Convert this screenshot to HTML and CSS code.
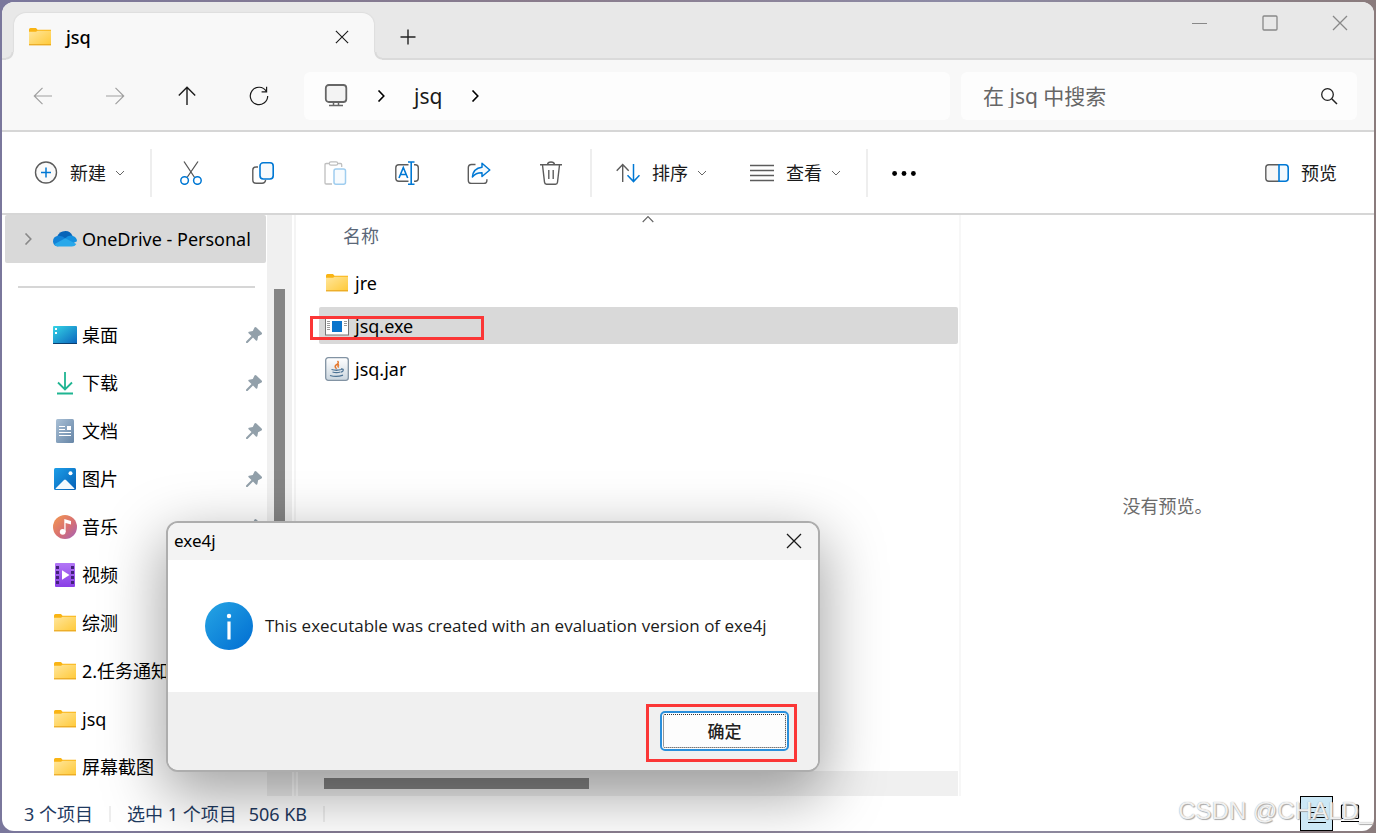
FILE: index.html
```html
<!DOCTYPE html>
<html lang="zh-CN">
<head>
<meta charset="utf-8">
<meta name="viewport" content="width=device-width, initial-scale=1">
<title>jsq</title>
<link rel="stylesheet" href="styles.css">
</head>
<body>
<svg class="defs" aria-hidden="true">
  <defs>
    <linearGradient id="g-folder" x1="0" y1="0" x2="1" y2="1"><stop offset="0" stop-color="#ffe69c"/><stop offset="1" stop-color="#ffc937"/></linearGradient>
    <linearGradient id="g-desk" x1="0" y1="0" x2="1" y2="1"><stop offset="0" stop-color="#35d5e6"/><stop offset="1" stop-color="#0a63bd"/></linearGradient>
    <linearGradient id="g-doc" x1="0" y1="0" x2="1" y2="1"><stop offset="0" stop-color="#a9c0d6"/><stop offset="1" stop-color="#6685a6"/></linearGradient>
    <linearGradient id="g-pic" x1="0" y1="0" x2="1" y2="1"><stop offset="0" stop-color="#1d9ee8"/><stop offset="1" stop-color="#0560b6"/></linearGradient>
    <linearGradient id="g-music" x1="0" y1="0" x2="1" y2="1"><stop offset="0" stop-color="#f59a4e"/><stop offset=".55" stop-color="#d76f72"/><stop offset="1" stop-color="#a362bb"/></linearGradient>
    <linearGradient id="g-video" x1="0" y1="0" x2="0" y2="1"><stop offset="0" stop-color="#b276f6"/><stop offset="1" stop-color="#8a3fe6"/></linearGradient>
    <linearGradient id="g-info" x1="0" y1="0" x2="1" y2="1"><stop offset="0" stop-color="#26a5e4"/><stop offset="1" stop-color="#006dd2"/></linearGradient>
    <linearGradient id="g-jar" x1="0" y1="0" x2="0" y2="1"><stop offset="0" stop-color="#fff"/><stop offset="1" stop-color="#cbd6df"/></linearGradient>
    <symbol id="folder" viewBox="0 0 24 24"><path d="M1 4.500q0-1.500 1.500-1.500h5.500l1.500 1.700h13.500v5H1z" fill="#f9b414"/><path d="M1 6.700h7l1.600-1H23v14.600H1z" fill="url(#g-folder)"/><path d="M1 19.300h22v1H1z" fill="#e5a019"/></symbol>
    <symbol id="pin" viewBox="0 0 18 18"><path d="M9.500 1.400q.9-.9 1.900 0l5.200 5.200q.9 1-.1 1.900l-3.400 1.800-.7 3.700q-.5 1.300-1.500.5L8 11.600 2.500 17H1.100v-1.400L6.500 10 3.600 7.200q-.8-1 .4-1.500l3.800-.8z" fill="#92a0aa"/></symbol>
    <symbol id="down" viewBox="0 0 12 12"><path d="M2 4l4 4 4-4" fill="none" stroke="#666" stroke-width="1"/></symbol>
    <symbol id="right" viewBox="0 0 12 12"><path d="M3.500 0.500L8.800 6 3.500 11.500" fill="none" stroke="currentColor" stroke-width="1.600"/></symbol>
    <symbol id="close" viewBox="0 0 16 16"><path d="M1 1l14 14M15 1L1 15" fill="none" stroke="currentColor" stroke-width="1.300"/></symbol>
  </defs>
</svg>

<div class="window">
  <header class="titlebar">
    <div class="tab">
      <svg class="i24"><use href="#folder"/></svg>
      <span class="tab-name">jsq</span>
      <button class="plain" aria-label="关闭标签页"><svg class="i14"><use href="#close"/></svg></button>
    </div>
    <button class="plain add" aria-label="新标签页"><svg class="i16" viewBox="0 0 16 16"><path d="M8 .5v15M.5 8h15" stroke="#222" stroke-width="1.400"/></svg></button>
    <div class="winctl">
      <button class="plain" aria-label="最小化"><svg class="i16" viewBox="0 0 16 16"><path d="M0 8.500h15" stroke="#888" stroke-width="1"/></svg></button>
      <button class="plain" aria-label="最大化"><svg class="i16" viewBox="0 0 16 16"><rect x="1" y="1" width="14" height="14" rx="1" fill="none" stroke="#888" stroke-width="1.300"/></svg></button>
      <button class="plain" aria-label="关闭"><svg class="i16"><use href="#close"/></svg></button>
    </div>
  </header>

  <nav class="navbar">
    <button class="plain nav-btn off" aria-label="后退"><svg class="i20" viewBox="0 0 20 20"><path d="M19 10H1.500M9.500 1.800L1.300 10l8.200 8.200" fill="none" stroke="currentColor" stroke-width="1.200"/></svg></button>
    <button class="plain nav-btn off" aria-label="前进"><svg class="i20" viewBox="0 0 20 20"><path d="M1 10h17.500M10.500 1.800l8.200 8.200-8.200 8.200" fill="none" stroke="currentColor" stroke-width="1.200"/></svg></button>
    <button class="plain nav-btn" aria-label="向上"><svg class="i20" viewBox="0 0 20 20"><path d="M10 19V1.500M1.800 9.500L10 1.300l8.200 8.200" fill="none" stroke="currentColor" stroke-width="1.400"/></svg></button>
    <button class="plain nav-btn" aria-label="刷新"><svg class="i20" viewBox="0 0 20 20"><path d="M17.300 5.200A8.700 8.700 0 1 0 18.700 10M17.600.8v5h-5" fill="none" stroke="currentColor" stroke-width="1.200"/></svg></button>
    <div class="address">
      <svg class="i24" viewBox="0 0 24 24"><rect x="1.800" y="1" width="20.500" height="17" rx="3" fill="#f3f3f3" stroke="#666" stroke-width="1.800"/><path d="M9.500 18.500v3M14.500 18.500v3M5 21.600h14" stroke="#666" stroke-width="1.500"/></svg>
      <svg class="i12"><use href="#right"/></svg>
      <a class="crumb" href="#">jsq</a>
      <svg class="i12"><use href="#right"/></svg>
    </div>
    <div class="search">
      <input type="search" aria-label="搜索" placeholder="在 jsq 中搜索">
      <svg class="i18" viewBox="0 0 18 18"><circle cx="7.500" cy="7.500" r="5.800" fill="none" stroke="#222" stroke-width="1.300"/><path d="M11.700 11.700l5.300 5.300" stroke="#222" stroke-width="1.500"/></svg>
    </div>
  </nav>

  <div class="toolbar">
    <button class="plain cmd">
      <svg class="i24" viewBox="0 0 24 24"><circle cx="12" cy="11.500" r="10.500" fill="#fafafa" stroke="#5c5c5c" stroke-width="1.400"/><path d="M12 6.500v10M7 11.500h10" stroke="#0078d4" stroke-width="1.500"/></svg>
      <span>新建</span><svg class="i12"><use href="#down"/></svg>
    </button>
    <i class="sep"></i>
    <button class="plain tool" aria-label="剪切"><svg class="i24" viewBox="0 0 24 24"><path d="M5 .5l10.600 16M19 .5L8.400 16" fill="none" stroke="#555" stroke-width="1.300"/><circle cx="5.600" cy="19.500" r="3.800" fill="#fff" stroke="#0078d4" stroke-width="1.500"/><circle cx="18.400" cy="19.500" r="3.800" fill="#fff" stroke="#0078d4" stroke-width="1.500"/></svg></button>
    <button class="plain tool" aria-label="复制"><svg class="i24" viewBox="0 0 24 24"><path d="M7 6H5Q1.800 6 1.800 9v10q0 3.200 3.200 3.200h6q3.200 0 3.600-3.400" fill="none" stroke="#5c5c5c" stroke-width="1.400"/><rect x="9" y="1.800" width="13.200" height="16.200" rx="3.200" fill="#f7fafc" stroke="#0078d4" stroke-width="1.600"/></svg></button>
    <button class="plain tool" aria-label="粘贴"><svg class="i24" viewBox="0 0 24 24"><path d="M6.500 2.500H3.200Q2 2.500 2 3.700v18.200Q2 23 3.200 23H9M14.500 2.500h3q1.200 0 1.200 1.300V6" fill="none" stroke="#bfbfbf" stroke-width="1.300"/><rect x="6.300" y=".8" width="8.400" height="3.400" rx="1.600" fill="#fff" stroke="#bfbfbf" stroke-width="1.200"/><rect x="11" y="8" width="11.500" height="15.200" rx="2" fill="#f7fbfe" stroke="#9fcdef" stroke-width="1.500"/></svg></button>
    <button class="plain tool" aria-label="重命名"><svg class="i24" viewBox="0 0 24 24"><path d="M13.500 3.700H3.800Q.8 3.700.8 6.700v10.600q0 3 3 3h9.700M19 3.700h1.300q3 0 3 3v10.600q0 3-3 3H19" fill="none" stroke="#5c5c5c" stroke-width="1.400"/><path d="M4 17L8.300 6.500 12.700 17M5.500 13.500h5.700M13 1h6.500M13 23.200h6.500M16.200 1v22" fill="none" stroke="#0078d4" stroke-width="1.600"/></svg></button>
    <button class="plain tool" aria-label="共享"><svg class="i24" viewBox="0 0 24 24"><path d="M8.500 3.500H4.500Q1.300 3.500 1.300 6.700v12.500q0 3.200 3.200 3.200h12.200q3.200 0 3.200-3.200v-1" fill="none" stroke="#5c5c5c" stroke-width="1.400"/><path d="M15 2.300l7.800 6.700-7.800 6.500v-3.700q-6-.2-9.600 4.200Q6 7.300 15 6.200z" fill="#f5fafd" stroke="#0078d4" stroke-width="1.500" stroke-linejoin="round"/></svg></button>
    <button class="plain tool" aria-label="删除"><svg class="i24" viewBox="0 0 24 24"><path d="M1 3.700h22M8.500 3.500q.3-2.500 3.500-2.500t3.500 2.500M3.500 4l2 17.200q.2 2 2 2h9q1.800 0 2-2L20.500 4M9.800 9v9M14.200 9v9" fill="none" stroke="#5c5c5c" stroke-width="1.400"/></svg></button>
    <i class="sep"></i>
    <button class="plain cmd">
      <svg class="i24" viewBox="0 0 24 24"><path d="M6.700 21V3.500M.7 9.700l6-6.300 6 6.300" fill="none" stroke="#5c5c5c" stroke-width="1.400"/><path d="M17.500 3v17.500M11.500 14.300l6 6.300 6-6.300" fill="none" stroke="#0078d4" stroke-width="1.500"/></svg>
      <span>排序</span><svg class="i12"><use href="#down"/></svg>
    </button>
    <button class="plain cmd">
      <svg class="i24" viewBox="0 0 24 24"><path d="M0 4.500h24M0 9.500h24M0 14.500h24M0 19.500h24" stroke="#5c5c5c" stroke-width="1.300"/></svg>
      <span>查看</span><svg class="i12"><use href="#down"/></svg>
    </button>
    <i class="sep"></i>
    <button class="plain tool" aria-label="更多"><svg class="i24" viewBox="0 0 24 24"><circle cx="2.600" cy="12.500" r="2.400"/><circle cx="12" cy="12.500" r="2.400"/><circle cx="21.400" cy="12.500" r="2.400"/></svg></button>
    <button class="plain cmd preview-btn">
      <svg class="i24" viewBox="0 0 24 24"><path d="M14 3.700H3.800Q.8 3.700.8 6.700v10.600q0 3 3 3H14" fill="#f7f7f7" stroke="#5c5c5c" stroke-width="1.400"/><path d="M14 3.700h6.200q3 0 3 3v10.600q0 3-3 3H14z" fill="#f2f9fe" stroke="#0078d4" stroke-width="1.600"/></svg>
      <span>预览</span>
    </button>
  </div>

  <main class="main">
    <aside class="side">
      <ul class="tree">
        <li class="node current"><svg class="i12 twist"><use href="#right"/></svg><svg class="i24" viewBox="0 0 24 24"><path d="M4 10q2-6 8.500-6 5 0 7 5l-9 7z" fill="#0864b8"/><path d="M5 8.800q4-.5 7.500 2.700L5 19.500Q0 19 0 14.200 0 9.700 5 8.800z" fill="#1382d6"/><path d="M12 11.500q3-3.400 7-2.800 5 1 5 5.500l-6 3z" fill="#1490df"/><path d="M12.300 11.300l11 5.800q-1.300 2.500-4.500 2.500H5.500q-2.800-.2-4.300-2.300z" fill="#28a8ea"/></svg><span>OneDrive - Personal</span></li>
        <li class="rule"></li>
        <li class="node"><svg class="i24" viewBox="0 0 24 24"><rect y="3" width="24" height="18" rx="1" fill="url(#g-desk)"/><path d="M0 20h24v.5q0 .5-1 .5H1q-1 0-1-.5z" fill="#0b3f6f"/><path d="M2 5h2v2H2zM2 9h2v2H2z" fill="#fff"/></svg><span>桌面</span><svg class="i18 pin"><use href="#pin"/></svg></li>
        <li class="node"><svg class="i24" viewBox="0 0 24 24"><path d="M12 1v18M5 11.500l7 7 7-7M4 22.500h16" fill="none" stroke="#1fb592" stroke-width="1.800"/></svg><span>下载</span><svg class="i18 pin"><use href="#pin"/></svg></li>
        <li class="node"><svg class="i24" viewBox="0 0 24 24"><rect x="3" width="18" height="24" rx="1.500" fill="url(#g-doc)"/><path d="M6 7.500h6M6 10.500h6M6 13.500h12M6 16.500h12" stroke="#fff" stroke-width="1"/><rect x="14" y="7" width="4" height="4" fill="#fff"/></svg><span>文档</span><svg class="i18 pin"><use href="#pin"/></svg></li>
        <li class="node"><svg class="i24" viewBox="0 0 24 24"><rect x="1" y="1" width="22" height="22" rx="1.500" fill="url(#g-pic)"/><path d="M2.500 21.500L11 13q1-.9 2 0l8.500 8.500q-.5.500-1 .500h-17q-.5 0-1-.5z" fill="#f4f9fd"/><circle cx="17.500" cy="6.300" r="2" fill="#fff"/></svg><span>图片</span><svg class="i18 pin"><use href="#pin"/></svg></li>
        <li class="node"><svg class="i24" viewBox="0 0 24 24"><circle cx="12" cy="12" r="12" fill="url(#g-music)"/><circle cx="9.700" cy="16.800" r="2.900" fill="#fff"/><path d="M11.300 4l6.700 2v3.500L12.600 8v9h-1.300z" fill="#fff"/></svg><span>音乐</span><svg class="i18 pin"><use href="#pin"/></svg></li>
        <li class="node"><svg class="i24" viewBox="0 0 24 24"><rect x="2" width="20" height="24" rx="1" fill="url(#g-video)"/><path d="M4.500 3v20M19.500 3v20" stroke="#43227a" stroke-width="3" stroke-dasharray="3 2"/><path d="M9 7.300l7.500 4.700L9 16.700z" fill="#fff"/></svg><span>视频</span></li>
        <li class="node"><svg class="i24"><use href="#folder"/></svg><span>综测</span></li>
        <li class="node"><svg class="i24"><use href="#folder"/></svg><span>2.任务通知</span></li>
        <li class="node"><svg class="i24"><use href="#folder"/></svg><span>jsq</span></li>
        <li class="node"><svg class="i24"><use href="#folder"/></svg><span>屏幕截图</span></li>
      </ul>
      <div class="vbar"><div class="vthumb"></div></div>
    </aside>

    <section class="files">
      <div class="colhead">
        <svg class="i12 caret" viewBox="0 0 12 12"><path d="M.7 7L6 1.700 11.300 7" fill="none" stroke="#666" stroke-width="1.200"/></svg>
        <span>名称</span>
      </div>
      <ul class="list">
        <li class="file"><svg class="i24"><use href="#folder"/></svg><span>jre</span></li>
        <li class="file selected"><svg class="i24" viewBox="0 0 24 24"><rect x=".5" y="2.500" width="23" height="18.500" fill="#fff" stroke="#777"/><rect x="7" y="7" width="10" height="11" fill="#0a74cc"/><path d="M2 7.500h3M2 9.500h3M2 11.500h3M2 13.500h3M2 15.500h3M19 7.500h3M19 9.500h3M19 11.500h3" stroke="#999"/></svg><span>jsq.exe</span><i class="mark"></i></li>
        <li class="file"><svg class="i24" viewBox="0 0 24 24"><rect x=".7" y=".7" width="22.600" height="22.600" rx="2.500" fill="url(#g-jar)" stroke="#8293a3" stroke-width="1.300"/><path d="M12.500 4q2 1.800-1 3.700-2.800 2 .2 4M14 7.500q-2 1.200-.3 3" fill="none" stroke="#e5762a" stroke-width="1.500"/><path d="M6.500 12.500q5 1.500 9.800 0M7.500 15q4 1.300 8 0M5 18.500q6.500 2 13-.3M16 12q3-.2 2 1.800-.8 1-2 1.200" fill="none" stroke="#4d7394" stroke-width="1.300"/></svg><span>jsq.jar</span></li>
      </ul>
      <div class="hbar"><div class="hthumb"></div></div>
    </section>

    <section class="preview"><p>没有预览。</p></section>
  </main>

  <footer class="status">
    <span>3 个项目</span><i></i><span>选中 1 个项目</span><span class="size">506 KB</span><i></i>
    <div class="views">
      <button class="plain view on" aria-label="详细信息"><svg class="i20" viewBox="0 0 20 20"><path d="M1 3.500h18M1 8.500h18M1 13.500h18M1 18.500h18" stroke="#000" stroke-width="1"/></svg></button>
      <button class="plain view" aria-label="大图标"><svg class="i20" viewBox="0 0 20 20"><rect x="1.500" y="1" width="17" height="13.500" rx="1" fill="none" stroke="#000" stroke-width="1.200"/><path d="M1 17.500h18" stroke="#000"/></svg></button>
    </div>
  </footer>
</div>

<div class="dialog" role="dialog" aria-labelledby="dlg-title">
  <div class="dlg-head"><span id="dlg-title">exe4j</span><button class="plain" aria-label="关闭"><svg class="i16"><use href="#close"/></svg></button></div>
  <div class="dlg-body">
    <svg class="i48" viewBox="0 0 48 48"><circle cx="24" cy="24" r="24" fill="url(#g-info)"/><circle cx="24" cy="14" r="2.200" fill="#fff"/><path d="M24 19.500v18" stroke="#fff" stroke-width="3.200"/></svg>
    <p>This executable was created with an evaluation version of exe4j</p>
  </div>
  <div class="dlg-foot"><div class="ok-mark"><button class="ok">确定</button></div></div>
</div>
<div class="watermark">CSDN @CHALD_</div>
</body>
</html>
```
FILE: styles.css
```css
* { box-sizing: border-box; }
body {
  margin: 0;
  height: 100vh;
  padding: 2px;
  overflow: hidden;
  position: relative;
  background: linear-gradient(90deg, #7a779c, #8a7c8c 40%, #8d8ba6 70%, #8a7b7c);
  font: 18px/24px "Noto Sans", "Noto Sans CJK SC", sans-serif;
  color: #000;
}
ul { list-style: none; margin: 0; padding: 0; }
p { margin: 0; }
svg { display: block; flex: none; }
.defs { position: absolute; width: 0; height: 0; }
.i12 { width: 12px; height: 12px; }
.i14 { width: 14px; height: 14px; }
.i16 { width: 16px; height: 16px; }
.i18 { width: 18px; height: 18px; }
.i20 { width: 20px; height: 20px; }
.i24 { width: 24px; height: 24px; }
.i48 { width: 48px; height: 48px; }
.plain {
  display: flex;
  align-items: center;
  justify-content: center;
  padding: 0;
  border: 0;
  background: none;
  font: inherit;
  color: #1a1a1a;
}

.window {
  height: 100%;
  display: flex;
  flex-direction: column;
  background: #fff;
  border-radius: 12px;
  overflow: hidden;
}

.titlebar {
  display: flex;
  height: 58px;
  padding: 11px 0 0 12px;
  background: #e8e8e8;
  box-shadow: inset 0 -2px #dadada;
}
.tab {
  position: relative;
  display: flex;
  align-items: center;
  width: 360px;
  padding: 0 25px 0 14px;
  background: #f8f8f8;
  border-radius: 12px 12px 0 0;
  box-shadow: 0 0 1px 1px #dedede;
  clip-path: inset(-2px -8px 0 -8px);
}
/* Curved feet that join the tab to the bar below */
.tab::before,
.tab::after {
  content: "";
  position: absolute;
  bottom: 0;
  width: 8px;
  height: 8px;
}
.tab::before { right: 100%; background: radial-gradient(circle at 0 0, #e8e8e8 5px, #dadada 6px 7px, #f8f8f8 8px); }
.tab::after { left: 100%; background: radial-gradient(circle at 100% 0, #e8e8e8 5px, #dadada 6px 7px, #f8f8f8 8px); }
.tab-name { flex: 1; margin-left: 14px; font-weight: 500; }
.add { width: 68px; }
.winctl { display: flex; gap: 54px; margin-left: auto; padding-right: 26px; height: 19px; }
.winctl .plain { color: #888; }

.navbar {
  display: flex;
  align-items: center;
  height: 72px;
  padding: 2px 17px 0 5px;
  background: #f8f8f8;
  border-bottom: 2px solid #d6d6d6;
}
.nav-btn { flex: none; width: 72px; height: 48px; }
.nav-btn.off { color: #a0a0a0; }
.address {
  display: flex;
  flex: 1;
  align-items: center;
  height: 48px;
  margin: 0 11px 0 9px;
  padding-left: 20px;
  gap: 27px;
  border-radius: 6px;
  background: #fdfdfd;
  font-size: 21px;
}
.crumb { color: #1a1a1a; text-decoration: none; }
.search {
  display: flex;
  align-items: center;
  flex: 0 1 396px;
  height: 48px;
  padding: 0 19px 0 22px;
  border-radius: 6px;
  background: #fdfdfd;
}
.search input {
  flex: 1;
  min-width: 0;
  padding: 0;
  border: 0;
  outline: 0;
  background: none;
  font: inherit;
  font-size: 21px;
}
.search input::placeholder { color: #666; opacity: 1; }

.toolbar {
  display: flex;
  align-items: center;
  height: 83px;
  padding: 0 37px 0 8px;
  border-bottom: 2px solid #d6d6d6;
}
.cmd { gap: 12px; height: 48px; padding: 0 24px; }
.cmd span + svg { margin-left: -4px; }
.cmd + .cmd { margin-left: -6px; }
.tool { width: 72px; height: 48px; }
.sep { width: 2px; height: 48px; margin: 0 3px 0 0; background: #eee; }
.tool + .sep { margin: 0 0 0 3px; }
.cmd + .cmd + .sep { margin-right: 0; }
.preview-btn { margin-left: auto; padding: 0; }

.main { display: flex; flex: 1; min-height: 0; }
.side { display: flex; flex: none; width: 294px; border-right: 2px solid #f4f4f4; }
.tree { flex: 1; min-width: 0; padding: 0 1px 0 3px; overflow: hidden; }
.node {
  display: flex;
  align-items: center;
  height: 48px;
  padding: 0 3px 0 48px;
  gap: 5px;
  white-space: nowrap;
}
.node.current { padding-left: 17px; background: #d9d9d9; border-radius: 2px; }
.twist { color: #888; margin-right: 14px; }
.pin { margin-left: auto; }
.rule { height: 48px; padding: 23px 11px 0 13px; }
.rule::before { content: ""; display: block; height: 2px; background: #d6d6d6; }
.vbar { width: 25px; margin-right: 2px; padding: 74px 7px 0; background: #f0f0f0; }
.vthumb { height: 380px; background: #858585; }

.files { display: flex; flex-direction: column; flex: none; width: 665px; padding: 0 1px 0 2px; border-right: 2px solid #f7f7f7; }
.colhead { position: relative; height: 49px; padding: 9px 0 0 45px; color: #5b6778; }
.caret { position: absolute; left: 344px; top: 0; }
.list { display: grid; gap: 6px; padding-left: 21px; }
.file { position: relative; display: flex; align-items: center; gap: 6px; height: 37px; padding-left: 6px; border-radius: 2px; }
.file.selected { background: #d9d9d9; }
.mark { position: absolute; left: -9px; top: 9px; width: 174px; height: 24px; border: 3px solid #fb3636; }
.hbar { height: 25px; margin-top: auto; padding: 7px 26px; background: #f0f0f0; }
.hthumb { width: 265px; height: 11px; background: #858585; }
.preview { display: flex; flex: 1; align-items: center; justify-content: center; color: #6b6b6b; }

.status { display: flex; align-items: center; height: 35px; padding: 0 8px 0 22px; color: #1f3a5f; }
.status i { width: 2px; height: 16px; margin: 0 16px; background: #eee; }
.size { margin-left: 12px; }
.views { display: flex; margin-left: auto; height: 35px; }
.view { width: 33px; }
.view.on { border: 1px solid #000; background: #cce8f6; }

.dialog {
  position: absolute;
  left: 166px;
  top: 521px;
  width: 654px;
  border: 2px solid #adadad;
  border-radius: 12px;
  overflow: hidden;
  background: #fff;
  box-shadow: 0 20px 60px 4px rgba(0, 0, 0, 0.36);
}
.dlg-head { display: flex; align-items: center; justify-content: space-between; height: 37px; padding: 0 16px 2px 6px; background: #f3f3f3; font-size: 17px; }
.dlg-body { display: flex; align-items: center; gap: 12px; height: 132px; padding: 0 37px; font-family: "Open Sans", sans-serif; font-size: 17px; white-space: nowrap; color: #1a1a1a; }
.dlg-foot { display: flex; justify-content: flex-end; height: 78px; padding: 12px 21px 0; background: #f0f0f0; }
.ok-mark { display: grid; height: 58px; padding: 4px 5px 8px 11px; border: 3px solid #fb3636; }
.ok {
  width: 129px;
  border: 2px solid #2a8fdb;
  border-radius: 5px;
  background: #fdfdfd;
  outline: 1px dotted #333;
  outline-offset: -4px;
  font: 500 17px/24px "Noto Sans CJK SC", sans-serif;
  color: #222;
}
.watermark {
  position: absolute;
  right: 4px;
  bottom: 8px;
  font: 24px/28px "Liberation Sans", sans-serif;
  color: rgba(255, 255, 255, 0.85);
  text-shadow: 0 0 1px #999, 1px 1px 1px #aaa;
  pointer-events: none;
}
```
